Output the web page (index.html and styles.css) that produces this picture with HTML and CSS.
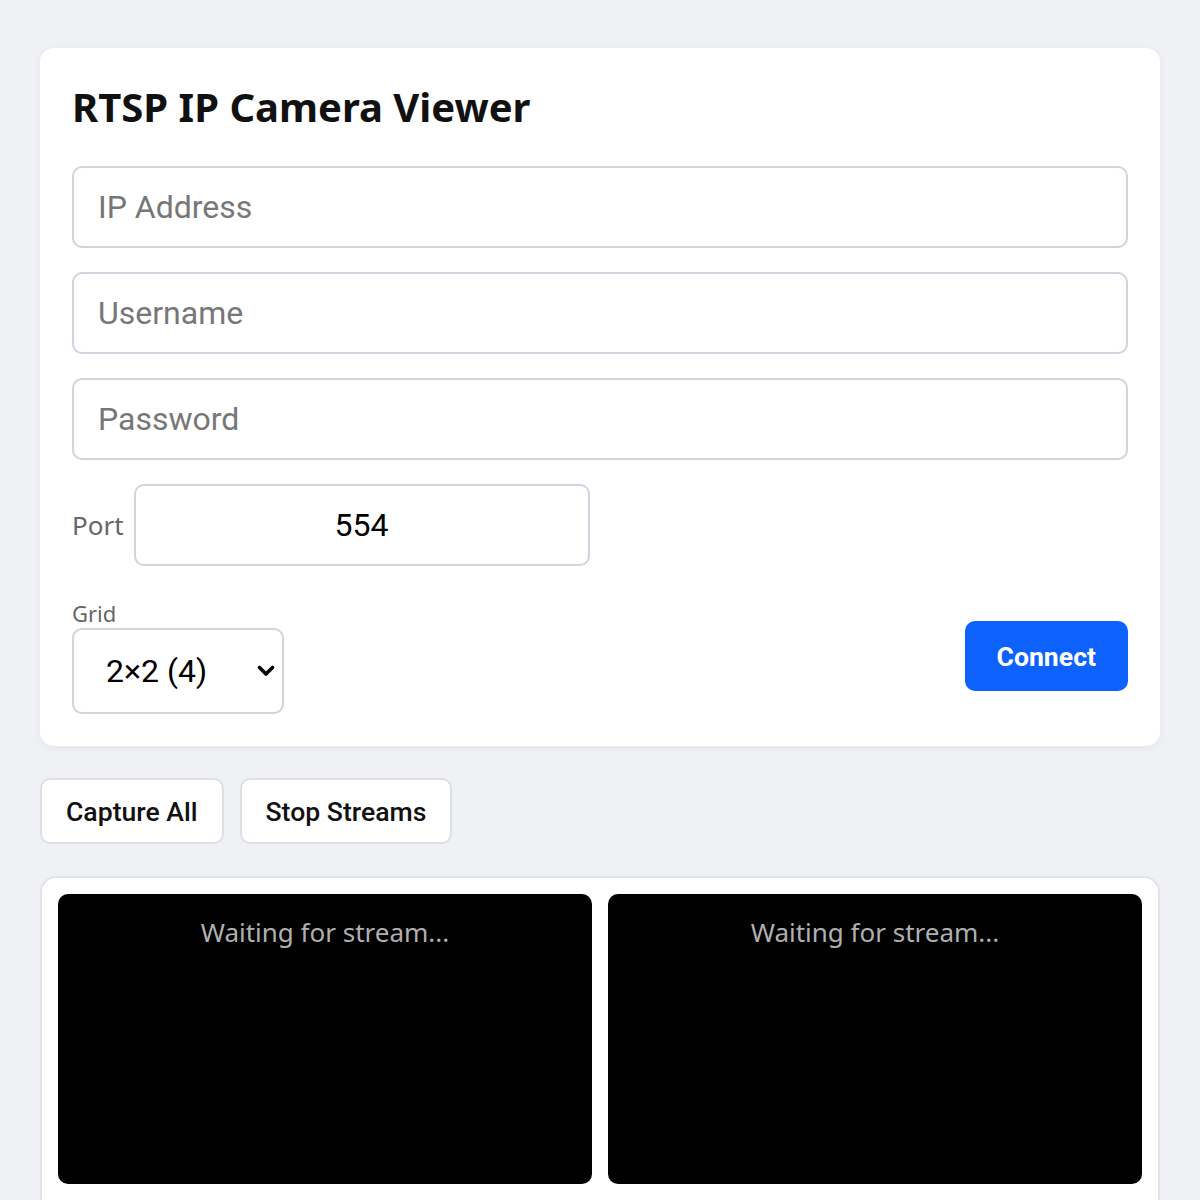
FILE: index.html
```html
<!DOCTYPE html>
<html lang="en">
<head>
    <meta charset="UTF-8">
    <meta name="viewport" content="width=device-width, initial-scale=1.0">
    <title>RTSP IP Camera Viewer</title>
    <link rel="stylesheet" href="styles.css">
</head>
<body>
<!--连接设置-->
<div class="panel">
    <h1 class="title">RTSP IP Camera Viewer</h1>

    <input class="field" type="text" placeholder="IP Address">
    <input class="field" type="text" placeholder="Username">
    <input class="field" type="password" placeholder="Password">

    <div class="portRow">
        <label for="port">Port</label>
        <input id="port" class="portInput" type="number" value="554">
    </div>

    <div class="bottomRow">
        <div class="gridPick">
            <label for="grid">Grid</label>
            <div class="selectWrap">
                <select id="grid" class="gridSelect">
                    <option>1×1 (1)</option>
                    <option selected>2×2 (4)</option>
                    <option>3×3 (9)</option>
                </select>
                <svg class="chevron" width="18" height="12" viewBox="0 0 18 12">
                    <path d="M2.5 2.5 L9 9 L15.5 2.5" fill="none" stroke="#000" stroke-width="3.6"
                          stroke-linecap="round" stroke-linejoin="round"/>
                </svg>
            </div>
        </div>
        <button class="connectButton">Connect</button>
    </div>
</div>

<!--操作按钮-->
<div class="actions">
    <button class="actionButton">Capture All</button>
    <button class="actionButton">Stop Streams</button>
</div>

<!--视频区域-->
<div class="streams">
    <div class="tile">Waiting for stream...</div>
    <div class="tile">Waiting for stream...</div>
    <div class="tile">Waiting for stream...</div>
    <div class="tile">Waiting for stream...</div>
</div>
</body>
</html>
```

FILE: styles.css
```css
* {
    margin: 0;
    padding: 0;
    box-sizing: border-box;
}

body {
    background-color: #eff1f5;
    padding: 48px 40px;
    font-family: "Noto Sans", sans-serif;
    color: #111;
}

.panel {
    background-color: #fff;
    border-radius: 14px;
    padding: 32px;
    box-shadow: 0 2px 8px rgba(0, 0, 0, 0.06);
}

.title {
    font-size: 40px;
    font-weight: 700;
    line-height: 54px;
    margin-bottom: 32px;
}

.field {
    display: block;
    width: 100%;
    height: 82px;
    margin-bottom: 24px;
    padding: 0 24px;
    border: 2px solid #d3d2de;
    border-radius: 10px;
    font-family: Roboto, sans-serif;
    font-size: 32px;
    color: #111;
    outline: none;
}

.field::placeholder {
    color: #777;
}

.portRow {
    display: flex;
    align-items: center;
}

.portRow > label {
    font-size: 26px;
    color: #666;
    margin-right: 10px;
}

.portInput {
    width: 456px;
    height: 82px;
    border: 2px solid #d3d2de;
    border-radius: 10px;
    text-align: center;
    font-family: Roboto, sans-serif;
    font-size: 32px;
    color: #000;
    outline: none;
    -moz-appearance: textfield;
}

.portInput::-webkit-inner-spin-button,
.portInput::-webkit-outer-spin-button {
    -webkit-appearance: none;
}

.bottomRow {
    margin-top: 32px;
    display: flex;
    justify-content: space-between;
    align-items: center;
}

.gridPick {
    display: flex;
    flex-direction: column;
    align-items: flex-start;
}

.gridPick > label {
    font-size: 22px;
    line-height: 30px;
    color: #666;
}

.selectWrap {
    position: relative;
}

.gridSelect {
    display: block;
    width: 212px;
    height: 86px;
    padding-left: 32px;
    border: 2px solid #d3d2de;
    border-radius: 10px;
    background-color: #fff;
    font-family: Roboto, sans-serif;
    font-size: 32px;
    color: #000;
    appearance: none;
    -webkit-appearance: none;
    outline: none;
}

.chevron {
    position: absolute;
    right: 9px;
    top: 37px;
    pointer-events: none;
}

.connectButton {
    height: 70px;
    padding: 0 32px;
    border: none;
    border-radius: 10px;
    background-color: #0d62fe;
    color: #fff;
    font-family: Roboto, sans-serif;
    font-size: 26.6px;
    font-weight: 700;
}

.actions {
    margin-top: 32px;
    display: flex;
    gap: 16px;
}

.actionButton {
    height: 66px;
    padding: 0 24px;
    border: 2px solid #dedfe3;
    border-radius: 10px;
    background-color: #fff;
    color: #111;
    font-family: Roboto, sans-serif;
    font-size: 26.6px;
    font-weight: 500;
}

.streams {
    margin-top: 32px;
    background-color: #fff;
    border: 2px solid #e3e4e8;
    border-radius: 16px;
    padding: 16px;
    display: grid;
    grid-template-columns: 1fr 1fr;
    gap: 16px;
}

.tile {
    height: 290px;
    background-color: #000;
    border-radius: 10px;
    padding-top: 20px;
    text-align: center;
    font-size: 26px;
    color: #b0b0b0;
}
```
